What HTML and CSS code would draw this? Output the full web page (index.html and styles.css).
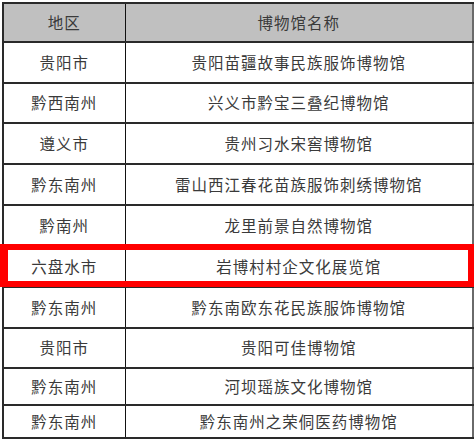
FILE: index.html
```html
<!DOCTYPE html>
<html lang="zh">
<head>
<meta charset="utf-8">
<link rel="stylesheet" href="styles.css">
</head>
<body>
<div class="wrap">
  <table class="museums">
    <colgroup><col class="c-region"><col class="c-name"></colgroup>
    <thead>
      <tr class="head"><th>地区</th><th>博物馆名称</th></tr>
    </thead>
    <tbody>
      <tr class="r41"><td>贵阳市</td><td>贵阳苗疆故事民族服饰博物馆</td></tr>
      <tr class="r40"><td>黔西南州</td><td>兴义市黔宝三叠纪博物馆</td></tr>
      <tr class="r41"><td>遵义市</td><td>贵州习水宋窖博物馆</td></tr>
      <tr class="r41"><td>黔东南州</td><td>雷山西江春花苗族服饰刺绣博物馆</td></tr>
      <tr class="r41"><td>黔南州</td><td>龙里前景自然博物馆</td></tr>
      <tr class="r41"><td>六盘水市</td><td>岩博村村企文化展览馆</td></tr>
      <tr class="r41"><td>黔东南州</td><td>黔东南欧东花民族服饰博物馆</td></tr>
      <tr class="r40"><td>贵阳市</td><td>贵阳可佳博物馆</td></tr>
      <tr class="r37"><td>黔东南州</td><td>河坝瑶族文化博物馆</td></tr>
      <tr class="r33"><td>黔东南州</td><td>黔东南州之荣侗医药博物馆</td></tr>
    </tbody>
  </table>
  <div class="highlight"></div>
</div>
</body>
</html>
```
FILE: styles.css
```css
html, body {
  margin: 0;
  padding: 0;
  background: #fff;
}
.wrap {
  position: relative;
  width: 474px;
  height: 440px;
  padding: 2px 0 0 2px;
  box-sizing: border-box;
}
.museums {
  border-collapse: collapse;
  table-layout: fixed;
  width: 470px;
  border-top: 2px solid #2a2a2a;
  border-left: 2px solid #2a2a2a;
  border-right: 2px solid #6a6a6a;
  border-bottom: 2px solid #2a2a2a;
  font-family: "Noto Sans CJK SC", "Noto Sans", sans-serif;
  font-size: 15.5px;
  color: #3a3a3a;
  letter-spacing: 1px;
}
.c-region { width: 122px; }
.c-name { width: 348px; }
.museums th, .museums td {
  padding: 0;
  text-align: center;
  vertical-align: middle;
  font-weight: normal;
  border-top: 2px solid #2a2a2a;
  border-bottom: 2px solid #2a2a2a;
  line-height: 1;
}
.museums th:first-child, .museums td:first-child {
  border-right: 1px solid #111;
}
.head {
  height: 39px;
  background: #c0c0c0;
}
.head th { padding-top: 0; }
.r41 { height: 41px; }
.r40 { height: 40px; }
.r37 { height: 37px; }
.r33 { height: 33px; }
.highlight {
  position: absolute;
  left: 0;
  top: 244px;
  width: 474px;
  height: 43px;
  border: 6px solid #ff0000;
  border-left-width: 8px;
  box-sizing: border-box;
  pointer-events: none;
}
```
